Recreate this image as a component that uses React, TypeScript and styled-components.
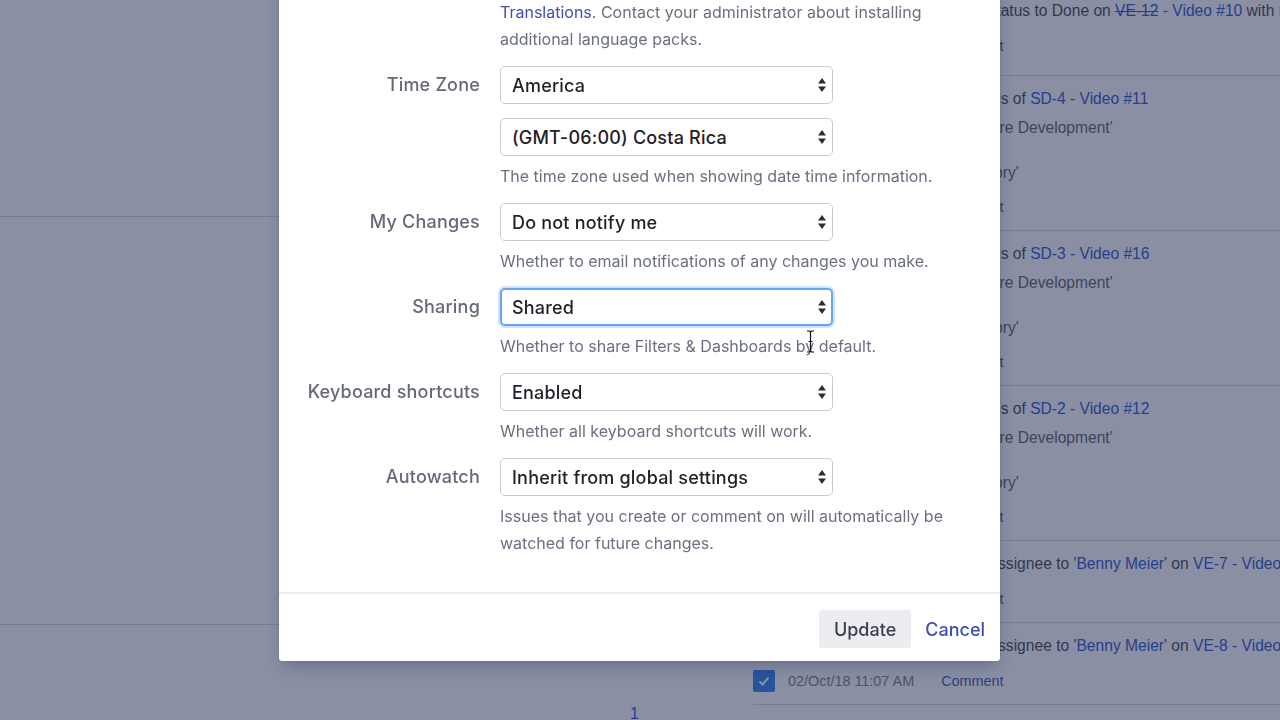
import styled, { createGlobalStyle } from "styled-components";

const GlobalStyle = createGlobalStyle`
  html, body {
    margin: 0;
    padding: 0;
    height: 100%;
    overflow: hidden;
    background: #ffffff;
    font-family: "Liberation Sans", Arial, sans-serif;
  }
  #root { height: 100%; }
`;

// Page behind the dialog
const Page = styled.div`
  display: flex;
  height: 720px;
  overflow: hidden;
  background: #ffffff;
`;

const LeftColumn = styled.div`
  width: 700px;
  flex-shrink: 0;
  display: flex;
  flex-direction: column;
`;

const Panel = styled.section<{ $height: number }>`
  flex-shrink: 0;
  height: ${({ $height }) => $height}px;
  box-sizing: border-box;
  border-bottom: 1px solid #d8dbe2;
  padding: 24px 0 0 320px;
  color: #505f79;
  font-size: 15px;
`;

const PanelTitle = styled.h3`
  margin: 0 0 12px;
  font-size: 17px;
  color: #333;
`;

const Pager = styled.div`
  flex-shrink: 0;
  margin-top: 80px;
  padding-left: 630px;
  font-size: 16px;
  color: #3b5bcc;
`;

const Stream = styled.div`
  flex: 1;
  min-width: 0;
  overflow: hidden;
  margin-top: -12px;
  padding-left: 53px;
`;

const StreamItem = styled.article<{ $tail?: number }>`
  padding: 12px 0 ${({ $tail }) => $tail ?? 12}px;
  border-bottom: 1px solid #d8dbe2;
`;

const Title = styled.div`
  font-size: 15.6px;
  line-height: 22px;
  color: #4f4f4f;
  white-space: nowrap;
`;

const Detail = styled.div<{ $gap: number }>`
  margin-top: ${({ $gap }) => $gap}px;
  font-size: 15.6px;
  line-height: 22px;
  color: #6a6a6a;
  white-space: nowrap;
`;

const StreamLink = styled.span<{ $struck?: boolean }>`
  color: #3b5bcc;
  text-decoration: ${({ $struck }) => ($struck ? "line-through" : "none")};
`;

const Meta = styled.div<{ $gap: number }>`
  margin-top: ${({ $gap }) => $gap}px;
  height: 22px;
  display: flex;
  align-items: center;
  font-size: 14.4px;
  white-space: nowrap;
`;

const TaskIcon = styled.span`
  width: 22px;
  height: 22px;
  border-radius: 2px;
  background: #3f86f2;
  display: flex;
  align-items: center;
  justify-content: center;
  flex-shrink: 0;
`;

const Stamp = styled.span`
  margin-left: 13px;
  color: #858585;
`;

const MetaAction = styled.span`
  margin-left: 27px;
  color: #4a64a8;
`;

// Dialog
const Blanket = styled.div`
  position: fixed;
  inset: 0;
  background: rgba(21, 31, 73, 0.5);
`;

const Dialog = styled.div`
  position: fixed;
  left: 279px;
  bottom: 59px;
  width: 721px;
  background: #ffffff;
  border-radius: 3px;
  box-shadow: 0 8px 16px -4px rgba(9, 30, 66, 0.3), 0 0 1px rgba(9, 30, 66, 0.35);
  font-family: Inter, "Noto Sans", sans-serif;
`;

const DialogHeader = styled.h2`
  margin: 0;
  padding: 22px 21px 20px;
  font-size: 22px;
  font-weight: 500;
  color: #172b4d;
`;

const DialogBody = styled.div`
  padding: 8px 45px 35px 21px;
`;

const FieldRow = styled.div`
  display: grid;
  grid-template-columns: 180px 455px;
  column-gap: 20px;
  margin-bottom: 13px;

  &:last-child { margin-bottom: 0; }
`;

const Label = styled.label`
  text-align: right;
  line-height: 38px;
  font-size: 18px;
  font-weight: 500;
  letter-spacing: 0.2px;
  color: #646978;
`;

const FieldCol = styled.div`
  display: flex;
  flex-direction: column;
  gap: 14px;
`;

const SelectBox = styled.div<{ $focused?: boolean }>`
  width: 333px;
  height: 38px;
  box-sizing: border-box;
  display: flex;
  align-items: center;
  justify-content: space-between;
  padding: 0 6px 0 11px;
  border: 1px solid #c8cbd2;
  border-radius: 5px;
  background: #ffffff;
  font-size: 18px;
  font-weight: 500;
  letter-spacing: 0.2px;
  color: #1f2028;

  ${({ $focused }) =>
    $focused &&
    `
    border: 2px solid #6aa3f6;
    padding: 0 5px 0 10px;
    box-shadow: 0 0 0 2px rgba(106, 163, 246, 0.3);
  `}
`;

const Description = styled.div`
  margin-top: -7px;
  font-size: 16px;
  line-height: 27px;
  color: #6b7080;
`;

const Link = styled.a`
  color: #3d4fb0;
  text-decoration: none;
`;

const DialogFooter = styled.div`
  border-top: 2px solid #ebecf0;
  display: flex;
  justify-content: flex-end;
  align-items: center;
  gap: 14px;
  padding: 16px 15px 13px;
`;

const UpdateButton = styled.button`
  height: 38px;
  padding: 0 15px;
  border: none;
  border-radius: 3px;
  background: #ecedf1;
  font-family: inherit;
  font-size: 18px;
  font-weight: 500;
  color: #3b3f4c;
`;

const CancelLink = styled.a`
  font-size: 18px;
  font-weight: 500;
  color: #3d4fb0;
  text-decoration: none;
`;

const Cursor = styled.svg`
  position: fixed;
  left: 806px;
  top: 330px;
`;

const Arrows = () => (
  <svg width="8" height="14" viewBox="0 0 8 14">
    <path d="M0 5.5 L4 0 L8 5.5 Z M0 8.5 L4 14 L8 8.5 Z" fill="#2b2d33" />
  </svg>
);

const Check = () => (
  <svg width="14" height="14" viewBox="0 0 14 14">
    <path d="M2.5 7.5 L5.5 10.5 L11.5 3.5" stroke="#fff" strokeWidth="2" fill="none" />
  </svg>
);

type Field = {
  label: string;
  values: string[];
  focused?: boolean;
  description?: React.ReactNode;
};

const fields: Field[] = [
  { label: "Page Size", values: ["50"], description: "Number of issues displayed per page in the Issue Navigator." },
  { label: "Email type", values: ["HTML"], description: "The type of email you would like to receive." },
  {
    label: "Language",
    values: ["English (United States)"],
    description: (
      <>
        Choose the language you want to use. More languages are available from
        <br />
        <Link href="#">Translations</Link>. Contact your administrator about installing additional language packs.
      </>
    ),
  },
  {
    label: "Time Zone",
    values: ["America", "(GMT-06:00) Costa Rica"],
    description: "The time zone used when showing date time information.",
  },
  {
    label: "My Changes",
    values: ["Do not notify me"],
    description: "Whether to email notifications of any changes you make.",
  },
  {
    label: "Sharing",
    values: ["Shared"],
    focused: true,
    description: "Whether to share Filters & Dashboards by default.",
  },
  {
    label: "Keyboard shortcuts",
    values: ["Enabled"],
    description: "Whether all keyboard shortcuts will work.",
  },
  {
    label: "Autowatch",
    values: ["Inherit from global settings"],
    description: "Issues that you create or comment on will automatically be watched for future changes.",
  },
];

const componentItems = [
  { key: "SD-4", title: "Video #11" },
  { key: "SD-3", title: "Video #16" },
  { key: "SD-2", title: "Video #12" },
];

function MetaLine({ gap }: { gap: number }) {
  return (
    <Meta $gap={gap}>
      <TaskIcon><Check /></TaskIcon>
      <Stamp>02/Oct/18 11:07 AM</Stamp>
      <MetaAction>Comment</MetaAction>
    </Meta>
  );
}

export default function App() {
  return (
    <>
      <GlobalStyle />
      <Page>
        <LeftColumn>
          <Panel $height={217}>
            <PanelTitle>Introduction</PanelTitle>
            Welcome to Jira
          </Panel>
          <Panel $height={408}>
            <PanelTitle>Assigned to Me</PanelTitle>
            Video #10
          </Panel>
          <Pager>1</Pager>
        </LeftColumn>

        <Stream>
          <StreamItem $tail={18}>
            <Title>
              Sebastian Hoffmann changed the status to Done on <StreamLink $struck>VE-12</StreamLink>
              <StreamLink> - Video #10</StreamLink> with resolution 'Done'
            </Title>
            <MetaLine gap={13} />
          </StreamItem>

          {componentItems.map((item) => (
            <StreamItem key={item.key}>
              <Title>
                Sebastian Hoffmann updated 2 fields of <StreamLink>{item.key} - {item.title}</StreamLink>
              </Title>
              <Detail $gap={7}>Changed the Component to 'Software Development'</Detail>
              <Detail $gap={23}>Changed the Issue Type field to 'Story'</Detail>
              <MetaLine gap={12} />
            </StreamItem>
          ))}

          {["VE-7", "VE-8"].map((key) => (
            <StreamItem key={key} $tail={12}>
              <Title>
                Sebastian Hoffmann changed the Assignee to '<StreamLink>Benny Meier</StreamLink>' on{" "}
                <StreamLink>{key} - Video</StreamLink>
              </Title>
              <MetaLine gap={13} />
            </StreamItem>
          ))}

          <StreamItem>
            <Title>Sebastian Hoffmann created <StreamLink>VE-9 - Video</StreamLink></Title>
          </StreamItem>
        </Stream>
      </Page>

      <Blanket />

      <Dialog>
        <DialogHeader>Update User Preferences</DialogHeader>
        <DialogBody>
          {fields.map((field) => (
            <FieldRow key={field.label}>
              <Label>{field.label}</Label>
              <FieldCol>
                {field.values.map((value) => (
                  <SelectBox key={value} $focused={field.focused}>
                    <span>{value}</span>
                    <Arrows />
                  </SelectBox>
                ))}
                {field.description && <Description>{field.description}</Description>}
              </FieldCol>
            </FieldRow>
          ))}
        </DialogBody>
        <DialogFooter>
          <UpdateButton>Update</UpdateButton>
          <CancelLink href="#">Cancel</CancelLink>
        </DialogFooter>
      </Dialog>

      <Cursor width="9" height="23" viewBox="0 0 9 23">
        <path d="M1 1 H3.5 L4.5 2 L5.5 1 H8 M4.5 2 V21 M1 22 H3.5 L4.5 21 L5.5 22 H8 M2.5 11.5 H6.5" stroke="#111" strokeWidth="1.2" fill="none" />
      </Cursor>
    </>
  );
}
